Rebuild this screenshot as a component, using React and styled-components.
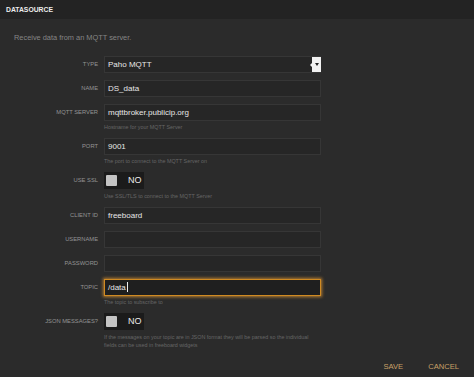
import React from "react";
import styled, { createGlobalStyle } from "styled-components";

const GlobalStyle = createGlobalStyle`
  html, body {
    margin: 0;
    padding: 0;
    background: #2b2b2b;
  }
  body {
    font-family: "Liberation Sans", Arial, sans-serif;
  }
  * {
    box-sizing: border-box;
  }
`;

const Dialog = styled.div`
  width: 474px;
  height: 377px;
  background: #2b2b2b;
  display: flex;
  flex-direction: column;
  overflow: hidden;
`;

const Header = styled.div`
  height: 19px;
  background: #232323;
  display: flex;
  align-items: center;
  padding-left: 6px;
  color: #ececec;
  font-size: 6.8px;
  font-weight: bold;
`;

const Description = styled.p`
  margin: 14px 0 13px 14px;
  font-size: 7.4px;
  line-height: 10px;
  color: #858585;
`;

const Form = styled.div`
  display: flex;
  flex-direction: column;
`;

const Row = styled.div`
  display: flex;
  align-items: flex-start;
  margin-bottom: 7px;
`;

const Label = styled.label`
  width: 98px;
  flex-shrink: 0;
  text-align: right;
  font-size: 5.8px;
  line-height: 17px;
  color: #949494;
  text-transform: uppercase;
`;

const Field = styled.div`
  margin-left: 6px;
  width: 217px;
  display: flex;
  flex-direction: column;
`;

const Input = styled.div`
  height: 17px;
  background: ${(p) => (p.$focused ? "#1f1f1f" : "#262626")};
  border: 1px solid ${(p) => (p.$focused ? "#d08a22" : "#363636")};
  box-shadow: ${(p) =>
    p.$focused ? "0 0 3px 1px rgba(226, 152, 52, 0.75)" : "none"};
  display: flex;
  align-items: center;
  padding-left: 3px;
  font-size: 8px;
  font-weight: normal;
  color: #e6e6e6;
  position: relative;
`;

const Caret = styled.span`
  display: inline-block;
  width: 1px;
  height: 10px;
  background: #eeeeee;
  margin-left: 1px;
`;

const SelectArrow = styled.div`
  position: absolute;
  right: -1px;
  top: 0;
  width: 9px;
  height: 15px;
  background: #f2f2f2;
  display: flex;
  align-items: center;
  justify-content: center;
  &::before {
    content: "";
    position: absolute;
    left: -2px;
    top: 6px;
    border-top: 2px solid transparent;
    border-bottom: 2px solid transparent;
    border-right: 2px solid #f2f2f2;
  }
  &::after {
    content: "";
    border-left: 2px solid transparent;
    border-right: 2px solid transparent;
    border-top: 3px solid #222;
  }
`;

const Help = styled.div`
  margin-top: ${(p) => (p.$toggle ? "3px" : "2px")};
  font-size: 5.4px;
  line-height: 8px;
  color: #666666;
`;

const Toggle = styled.div`
  width: 40px;
  height: 17px;
  background: #1b1b1b;
  display: flex;
  align-items: center;
  padding-left: 2px;
`;

const Knob = styled.span`
  width: 11px;
  height: 11px;
  background: #c4c4c4;
  border-radius: 1px;
`;

const ToggleText = styled.span`
  margin-left: 11px;
  font-size: 9px;
  color: #ececec;
`;

const Footer = styled.div`
  margin-top: auto;
  height: 22px;
  display: flex;
  justify-content: flex-end;
  align-items: center;
  padding-right: 15px;
  gap: 25px;
`;

const Action = styled.span`
  font-size: 7.6px;
  color: #c9a067;
  text-transform: uppercase;
`;

const TextRow = ({ label, value, help, focused, select, caret }) => (
  <Row>
    <Label>{label}</Label>
    <Field>
      <Input $focused={focused}>
        {value}
        {caret && <Caret />}
        {select && <SelectArrow />}
      </Input>
      {help && <Help>{help}</Help>}
    </Field>
  </Row>
);

const ToggleRow = ({ label, help }) => (
  <Row>
    <Label>{label}</Label>
    <Field>
      <Toggle>
        <Knob />
        <ToggleText>NO</ToggleText>
      </Toggle>
      {help && <Help $toggle>{help}</Help>}
    </Field>
  </Row>
);

export default function App() {
  return (
    <>
      <GlobalStyle />
      <Dialog>
        <Header>DATASOURCE</Header>
        <Description>Receive data from an MQTT server.</Description>
        <Form>
          <TextRow label="Type" value="Paho MQTT" select />
          <TextRow label="Name" value="DS_data" />
          <TextRow
            label="MQTT Server"
            value="mqttbroker.publicip.org"
            help="Hostname for your MQTT Server"
          />
          <TextRow
            label="Port"
            value="9001"
            help="The port to connect to the MQTT Server on"
          />
          <ToggleRow
            label="Use SSL"
            help="Use SSL/TLS to connect to the MQTT Server"
          />
          <TextRow label="Client ID" value="freeboard" />
          <TextRow label="Username" value="" />
          <TextRow label="Password" value="" />
          <TextRow
            label="Topic"
            value="/data"
            caret
            focused
            help="The topic to subscribe to"
          />
          <ToggleRow
            label="JSON Messages?"
            help="If the messages on your topic are in JSON format they will be parsed so the individual fields can be used in freeboard widgets"
          />
        </Form>
        <Footer>
          <Action>Save</Action>
          <Action>Cancel</Action>
        </Footer>
      </Dialog>
    </>
  );
}
